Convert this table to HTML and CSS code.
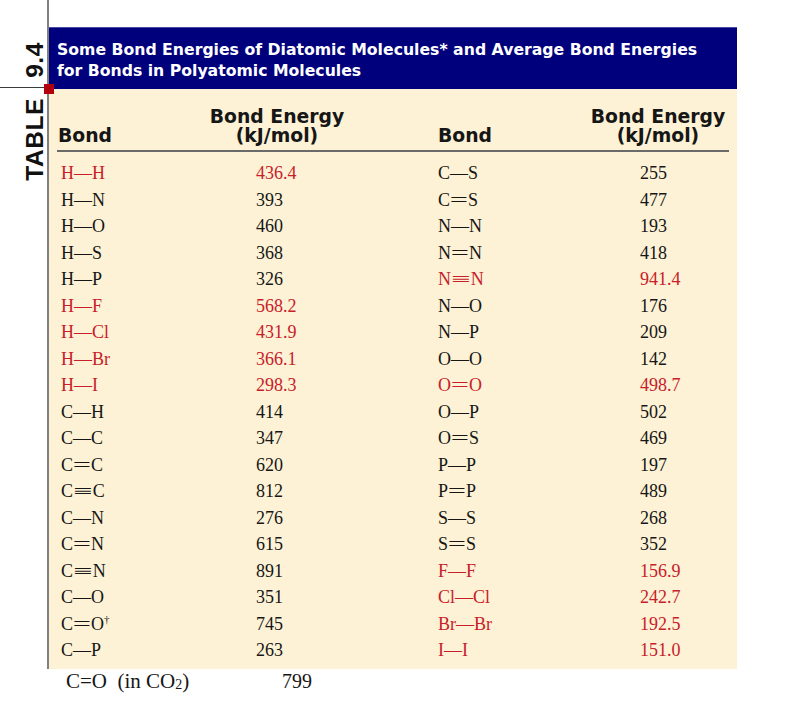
FILE: index.html
```html
<!DOCTYPE html>
<html lang="en">
<head>
<meta charset="utf-8">
<title>Table 9.4 Bond Energies</title>
<link rel="stylesheet" href="styles.css">
</head>
<body>
<div class="frame">
  <div class="side">
    <div class="side-top"><span class="vlabel">9.4</span></div>
    <div class="side-bottom"><span class="vlabel">TABLE</span></div>
  </div>
  <div class="main">
    <div class="title">Some Bond Energies of Diatomic Molecules* and Average Bond Energies<br>for Bonds in Polyatomic Molecules</div>
    <div class="table">
      <div class="th th-bond">Bond</div>
      <div class="th th-energy">Bond Energy<br>(kJ/mol)</div>
      <div class="th th-bond th-bond2">Bond</div>
      <div class="th th-energy">Bond Energy<br>(kJ/mol)</div>

      <div class="td c1 r">H—H</div><div class="td c2 r">436.4</div><div class="td c3">C—S</div><div class="td c4">255</div>
      <div class="td c1">H—N</div><div class="td c2">393</div><div class="td c3">C<span class="b2">=</span>S</div><div class="td c4">477</div>
      <div class="td c1">H—O</div><div class="td c2">460</div><div class="td c3">N—N</div><div class="td c4">193</div>
      <div class="td c1">H—S</div><div class="td c2">368</div><div class="td c3">N<span class="b2">=</span>N</div><div class="td c4">418</div>
      <div class="td c1">H—P</div><div class="td c2">326</div><div class="td c3 r">N<span class="b3">≡</span>N</div><div class="td c4 r">941.4</div>
      <div class="td c1 r">H—F</div><div class="td c2 r">568.2</div><div class="td c3">N—O</div><div class="td c4">176</div>
      <div class="td c1 r">H—Cl</div><div class="td c2 r">431.9</div><div class="td c3">N—P</div><div class="td c4">209</div>
      <div class="td c1 r">H—Br</div><div class="td c2 r">366.1</div><div class="td c3">O—O</div><div class="td c4">142</div>
      <div class="td c1 r">H—I</div><div class="td c2 r">298.3</div><div class="td c3 r">O<span class="b2">=</span>O</div><div class="td c4 r">498.7</div>
      <div class="td c1">C—H</div><div class="td c2">414</div><div class="td c3">O—P</div><div class="td c4">502</div>
      <div class="td c1">C—C</div><div class="td c2">347</div><div class="td c3">O<span class="b2">=</span>S</div><div class="td c4">469</div>
      <div class="td c1">C<span class="b2">=</span>C</div><div class="td c2">620</div><div class="td c3">P—P</div><div class="td c4">197</div>
      <div class="td c1">C<span class="b3">≡</span>C</div><div class="td c2">812</div><div class="td c3">P<span class="b2">=</span>P</div><div class="td c4">489</div>
      <div class="td c1">C—N</div><div class="td c2">276</div><div class="td c3">S—S</div><div class="td c4">268</div>
      <div class="td c1">C<span class="b2">=</span>N</div><div class="td c2">615</div><div class="td c3">S<span class="b2">=</span>S</div><div class="td c4">352</div>
      <div class="td c1">C<span class="b3">≡</span>N</div><div class="td c2">891</div><div class="td c3 r">F—F</div><div class="td c4 r">156.9</div>
      <div class="td c1">C—O</div><div class="td c2">351</div><div class="td c3 r">Cl—Cl</div><div class="td c4 r">242.7</div>
      <div class="td c1">C<span class="b2">=</span>O<sup class="dag">†</sup></div><div class="td c2">745</div><div class="td c3 r">Br—Br</div><div class="td c4 r">192.5</div>
      <div class="td c1">C—P</div><div class="td c2">263</div><div class="td c3 r">I—I</div><div class="td c4 r">151.0</div>
    </div>
  </div>
  <span class="corner"></span>
</div>
<div class="footer"><span class="f-bond">C=O&nbsp;&nbsp;(in CO<sub class="sub">2</sub>)</span><span class="f-val">799</span></div>
</body>
</html>
```

FILE: styles.css
```css
html, body {
  margin: 0;
  padding: 0;
  background: #ffffff;
}

body {
  font-family: "Liberation Serif", "DejaVu Serif", serif;
  color: #161616;
}

.frame {
  position: relative;
  display: flex;
  height: 669px;
}

.side {
  width: 47px;
  border-right: 2px solid #808080;
  display: flex;
  flex-direction: column;
}

.side-top {
  height: 88px;
  border-bottom: 1px solid #3a3a3a;
  display: flex;
  flex-direction: column;
  justify-content: flex-end;
  padding-bottom: 9px;
  box-sizing: border-box;
}

.side-bottom {
  padding-top: 10px;
}

.vlabel {
  display: block;
  width: 24px;
  margin-left: 23px;
  writing-mode: vertical-rl;
  transform: rotate(180deg);
  font-family: "Liberation Sans", Arial, sans-serif;
  font-weight: 700;
  font-size: 24.5px;
  line-height: 24px;
  letter-spacing: 0.6px;
  color: #111;
}

.corner {
  position: absolute;
  left: 44px;
  top: 84px;
  width: 10px;
  height: 10px;
  background: #b3000f;
}

.main {
  width: 688px;
  padding-top: 27px;
  display: flex;
  flex-direction: column;
}

.title {
  box-sizing: border-box;
  height: 62px;
  padding: 11px 8px 0 8px;
  background: #00007c;
  border-top: 1px solid #4a4aa6;
  color: #ffffff;
  font-family: "DejaVu Sans", "Liberation Sans", sans-serif;
  font-weight: 700;
  font-size: 15.7px;
  line-height: 21px;
}

.table {
  flex: 1;
  background: #fdf2d5;
  padding: 0 8px 0 8px;
  display: grid;
  grid-template-columns: 143px 154px 233px 142px;
  grid-template-rows: auto;
  grid-auto-rows: 26.52px;
  align-content: start;
}

.th {
  padding-top: 18px;
  padding-bottom: 5px;
  margin-bottom: 8px;
  border-bottom: 2px solid #6a6a6a;
  font-family: "DejaVu Sans", "Liberation Sans", sans-serif;
  font-weight: 700;
  font-size: 18.8px;
  line-height: 19px;
  color: #161616;
  white-space: nowrap;
}

.th-bond {
  display: flex;
  align-items: flex-end;
  padding-left: 1px;
}

.th-bond2 {
  padding-left: 84px;
}

.th-energy {
  text-align: center;
}

.td {
  font-size: 18px;
  line-height: 26.52px;
  white-space: nowrap;
}

.c1 {
  padding-left: 4px;
}

.c2 {
  padding-left: 56px;
}

.c3 {
  padding-left: 84px;
}

.c4 {
  padding-left: 53px;
}

.r {
  color: #c8202a;
}

.b2,
.b3 {
  display: inline-block;
  width: 1em;
  text-align: center;
  line-height: 1;
}

.b2 {
  transform: scaleX(1.8);
}

.b3 {
  width: 1.1em;
  transform: scaleX(1.9);
}

.dag {
  font-size: 11px;
  line-height: 0;
  vertical-align: 7px;
}

.footer {
  display: flex;
  padding-left: 66px;
  font-family: "Liberation Serif", "DejaVu Serif", serif;
  font-size: 20px;
  line-height: 24px;
  color: #161616;
}

.f-bond {
  width: 216px;
  font-size: 21px;
}

.sub {
  font-size: 14px;
  line-height: 0;
  vertical-align: -1px;
}
```
